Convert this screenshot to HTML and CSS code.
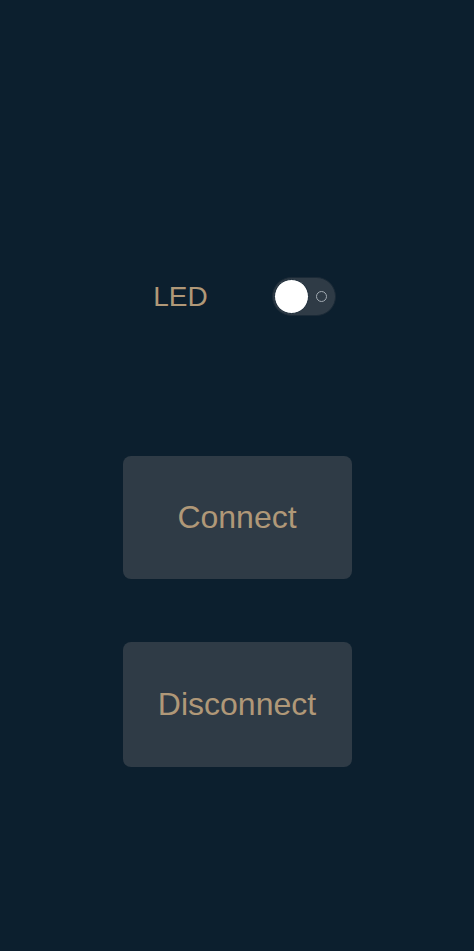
FILE: index.html
```html
<!DOCTYPE html>
<html lang="en">
<head>
    <meta charset="UTF-8">
    <meta name="viewport" content="width=device-width, initial-scale=1.0">
    <title>LED Control</title>
    <link rel="stylesheet" href="styles.css">
</head>
<body>
    <div class="container">
        <!-- LED switch -->
        <div class="led-row">
            <span class="led-label">LED</span>
            <div class="toggle">
                <span class="knob"></span>
                <span class="off-mark"></span>
            </div>
        </div>

        <!-- Connection buttons -->
        <div class="button-group">
            <button class="action connect">Connect</button>
            <button class="action disconnect">Disconnect</button>
        </div>
    </div>
</body>
</html>
```

FILE: styles.css
```css
body { font-family: 'Liberation Sans', Arial, sans-serif; background-color: #0c1f2e; color: #b09878; margin: 0; padding: 0; }
.container { min-height: 951px; display: flex; flex-direction: column; align-items: center; padding-top: 277px; box-sizing: border-box; }
.led-row { display: flex; align-items: center; gap: 64px; padding-left: 15px; height: 39px; }
.led-label { font-size: 28px; line-height: 1; }
.toggle { width: 64px; height: 39px; box-sizing: border-box; border-radius: 20px; background-color: #2f3b46; border: 1px solid #1b2a37; display: flex; align-items: center; padding-left: 1px; }
.knob { width: 35px; height: 35px; border-radius: 50%; background-color: #ffffff; border: 1px solid #1b2a37; box-sizing: border-box; }
.off-mark { width: 11px; height: 11px; border-radius: 50%; border: 1.5px solid #a3abb3; box-sizing: border-box; margin-left: 7px; }
.button-group { display: flex; flex-direction: column; gap: 63px; margin-top: 140px; }
.action { width: 229px; border: none; border-radius: 8px; background-color: #2f3b46; color: #b09878; font-family: inherit; font-size: 32px; cursor: pointer; }
.connect { height: 123px; }
.disconnect { height: 125px; }
```
